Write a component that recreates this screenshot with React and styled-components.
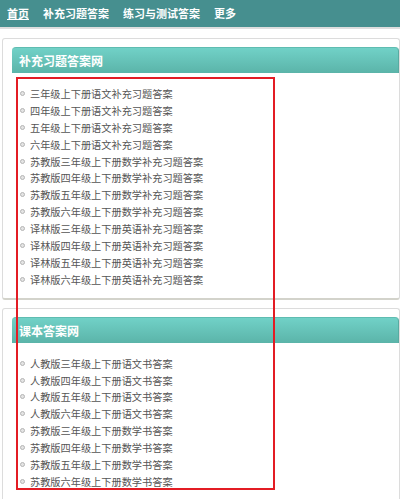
import React from 'react';
import styled, { createGlobalStyle } from 'styled-components';

const GlobalStyle = createGlobalStyle`
  html, body {
    margin: 0;
    padding: 0;
    background: #fff;
    overflow: hidden;
  }
  body {
    font-family: "Noto Sans CJK SC", "Noto Sans", sans-serif;
  }
`;

const navLinks = ['首页', '补充习题答案', '练习与测试答案', '更多'];

const sections = [
  {
    title: '补充习题答案网',
    items: [
      '三年级上下册语文补充习题答案',
      '四年级上下册语文补充习题答案',
      '五年级上下册语文补充习题答案',
      '六年级上下册语文补充习题答案',
      '苏教版三年级上下册数学补充习题答案',
      '苏教版四年级上下册数学补充习题答案',
      '苏教版五年级上下册数学补充习题答案',
      '苏教版六年级上下册数学补充习题答案',
      '译林版三年级上下册英语补充习题答案',
      '译林版四年级上下册英语补充习题答案',
      '译林版五年级上下册英语补充习题答案',
      '译林版六年级上下册英语补充习题答案',
    ],
  },
  {
    title: '课本答案网',
    items: [
      '人教版三年级上下册语文书答案',
      '人教版四年级上下册语文书答案',
      '人教版五年级上下册语文书答案',
      '人教版六年级上下册语文书答案',
      '苏教版三年级上下册数学书答案',
      '苏教版四年级上下册数学书答案',
      '苏教版五年级上下册数学书答案',
      '苏教版六年级上下册数学书答案',
    ],
  },
];

export default function App() {
  return (
    <S.Page>
      <GlobalStyle />
      <S.Nav>
        {navLinks.map((link, i) => (
          <S.NavLink key={link} $active={i === 0}>
            {link}
          </S.NavLink>
        ))}
      </S.Nav>
      <S.Main>
        {sections.map(section => (
          <S.Box key={section.title}>
            <S.BoxHeader>{section.title}</S.BoxHeader>
            <S.List>
              {section.items.map(item => (
                <S.Item key={item}>{item}</S.Item>
              ))}
            </S.List>
          </S.Box>
        ))}
      </S.Main>
      {/* 빨간 표시 박스 */}
      <S.Highlight />
    </S.Page>
  );
}

const S = {
  Page: styled.div`
    position: relative;
    width: 400px;
    height: 499px;
    overflow: hidden;
  `,
  Nav: styled.div`
    display: flex;
    align-items: center;
    gap: 14px;
    height: 27px;
    padding-left: 7px;
    background: #468f8f;
    border-bottom: 2px solid #dedede;
  `,
  NavLink: styled.a`
    font-size: 11px;
    font-weight: bold;
    color: #fff;
    line-height: 27px;
    text-decoration: ${p => (p.$active ? 'underline' : 'none')};
    white-space: nowrap;
  `,
  Main: styled.div`
    display: flex;
    flex-direction: column;
    gap: 8px;
    padding: 9px 0 0 2px;
  `,
  Box: styled.div`
    width: 387px;
    padding: 8px 0 8px 9px;
    border: 1px solid #dcdcdc;
    border-bottom: 2px solid #d3d3cb;
    border-radius: 3px;
    background: #fff;
  `,
  BoxHeader: styled.div`
    height: 25px;
    padding-left: 7px;
    line-height: 25px;
    font-size: 12px;
    font-weight: bold;
    color: #fff;
    background: linear-gradient(#71d1c7, #5bb4a9);
    border-top: 1px solid #5fbcb1;
    border-right: 1px solid #58aba1;
    border-radius: 4px 4px 0 0;
  `,
  List: styled.ul`
    list-style: none;
    margin: 0;
    padding: 12px 0 2px 8px;
  `,
  Item: styled.li`
    display: flex;
    align-items: center;
    gap: 5px;
    height: 16.9px;
    font-size: 10.2px;
    color: #555;
    white-space: nowrap;
    &::before {
      content: '';
      width: 3px;
      height: 3px;
      border-radius: 50%;
      background: #e4e4e4;
      border: 1px solid #b4b4b4;
    }
  `,
  Highlight: styled.div`
    position: absolute;
    left: 16px;
    top: 77px;
    width: 255px;
    height: 409px;
    border: 2px solid #e31c24;
    pointer-events: none;
  `,
};
